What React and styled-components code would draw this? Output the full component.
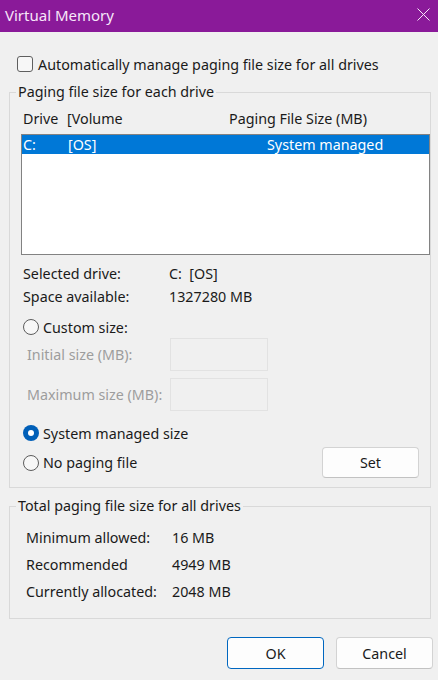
import styled, { createGlobalStyle } from "styled-components";

const GlobalStyle = createGlobalStyle`
  html, body {
    margin: 0;
    padding: 0;
    background: #f0f0f0;
  }
  body {
    font-family: "Noto Sans", "Open Sans", sans-serif;
    font-size: 14.3px;
    color: #1a1a1a;
  }
`;

const Window = styled.div`
  width: 438px;
  height: 680px;
  background: #f0f0f0;
  overflow: hidden;
`;

const TitleBar = styled.div`
  height: 32px;
  background: #8a1a99;
  display: flex;
  align-items: center;
  justify-content: space-between;
  padding: 0 8px 3px 5px;
  box-sizing: border-box;
  color: #f7e6f9;
  font-size: 15px;
`;

const CloseButton = styled.div`
  width: 14px;
  height: 14px;
  display: flex;
  align-items: center;
  justify-content: center;
`;

const Body = styled.div`
  padding: 22px 7px 0 9px;
`;

const CheckRow = styled.label`
  display: flex;
  align-items: center;
  gap: 5px;
  height: 20px;
  padding-left: 8px;
`;

const CheckBox = styled.span`
  width: 14px;
  height: 14px;
  border: 1px solid #5f5f5f;
  border-radius: 3px;
  background: #f7f7f7;
`;

const Group = styled.fieldset`
  margin: ${({ $top }) => $top}px 0 0 0;
  padding: 0;
  width: 420px;
  border: 1px solid #d9d9d9;
  min-width: 0;
`;

const Legend = styled.legend`
  margin-left: 6px;
  padding: 0 2px;
  line-height: 20px;
`;

const GroupContent = styled.div`
  padding: ${({ $pad }) => $pad};
`;

const ListHeader = styled.div`
  display: grid;
  grid-template-columns: 44px 162px 1fr;
  height: 20px;
  align-items: center;
  padding-left: 2px;
  margin-top: 6px;
`;

const ListBox = styled.div`
  margin-top: 6px;
  height: 119px;
  border: 1px solid #828282;
  background: #ffffff;
`;

const ListRow = styled.div`
  display: grid;
  grid-template-columns: 45px 199px 1fr;
  height: 19px;
  align-items: center;
  padding-left: 1px;
  background: ${({ $selected }) => ($selected ? "#0078d7" : "transparent")};
  color: ${({ $selected }) => ($selected ? "#ffffff" : "#1a1a1a")};
`;

const InfoRow = styled.div`
  display: grid;
  grid-template-columns: ${({ $label }) => $label}px 1fr;
  height: 20px;
  align-items: center;
  padding-left: ${({ $indent }) => $indent}px;
  margin-top: ${({ $top }) => $top}px;
`;

const RadioRow = styled.label`
  display: flex;
  align-items: center;
  gap: 4px;
  height: 20px;
  margin-left: 2px;
  margin-top: ${({ $top }) => $top}px;
`;

const Radio = styled.span`
  box-sizing: border-box;
  width: 16px;
  height: 16px;
  border-radius: 50%;
  border: ${({ $checked }) => ($checked ? "none" : "1px solid #5c5c5c")};
  background: ${({ $checked }) => ($checked ? "#005fb8" : "#f7f7f7")};
  display: flex;
  align-items: center;
  justify-content: center;

  &::after {
    content: "";
    display: ${({ $checked }) => ($checked ? "block" : "none")};
    width: 6px;
    height: 6px;
    border-radius: 50%;
    background: #ffffff;
  }
`;

const FieldRow = styled.div`
  display: grid;
  grid-template-columns: 143px 98px;
  align-items: center;
  padding-left: 6px;
  margin-top: ${({ $top }) => $top}px;
  color: #9d9d9d;
`;

const DisabledInput = styled.div`
  box-sizing: border-box;
  height: 33px;
  border: 1px solid #e2e2e2;
  background: #f0f0f0;
`;

const BottomRow = styled.div`
  display: flex;
  align-items: center;
  justify-content: space-between;
  margin-top: 4px;
  margin-right: 11px;
`;

const Button = styled.button`
  box-sizing: border-box;
  width: 97px;
  height: ${({ $h }) => $h}px;
  font: inherit;
  color: #1a1a1a;
  background: #fdfdfd;
  border: 1px solid ${({ $primary }) => ($primary ? "#0067c0" : "#d3d3d3")};
  border-bottom-color: ${({ $primary }) => ($primary ? "#0067c0" : "#c2c2c2")};
  border-radius: 4px;
  padding: 0;
`;

const Footer = styled.div`
  display: flex;
  justify-content: flex-end;
  gap: 12px;
  margin-top: 18px;
  padding-right: 5px;
  margin-right: -7px;
`;

const totals = [
  ["Minimum allowed:", "16 MB"],
  ["Recommended", "4949 MB"],
  ["Currently allocated:", "2048 MB"],
];

export default function App() {
  return (
    <Window>
      <GlobalStyle />
      <TitleBar>
        <span>Virtual Memory</span>
        <CloseButton>
          <svg width="13" height="13" viewBox="0 0 13 13">
            <path d="M0.5 0.5L12.5 12.5M12.5 0.5L0.5 12.5" stroke="#f7e6f9" strokeWidth="1" />
          </svg>
        </CloseButton>
      </TitleBar>
      <Body>
        <CheckRow>
          <CheckBox />
          <span>Automatically manage paging file size for all drives</span>
        </CheckRow>

        <Group $top={8}>
          <Legend>Paging file size for each drive</Legend>
          <GroupContent $pad="0 0 9px 11px">
            <ListHeader>
              <span>Drive</span>
              <span>[Volume</span>
              <span>Paging File Size (MB)</span>
            </ListHeader>
            <ListBox>
              <ListRow $selected>
                <span>C:</span>
                <span>[OS]</span>
                <span>System managed</span>
              </ListRow>
            </ListBox>
            <InfoRow $label={146} $indent={2} $top={8}>
              <span>Selected drive:</span>
              <span>C:&nbsp; [OS]</span>
            </InfoRow>
            <InfoRow $label={146} $indent={2} $top={3}>
              <span>Space available:</span>
              <span>1327280 MB</span>
            </InfoRow>
            <RadioRow $top={11}>
              <Radio />
              <span>Custom size:</span>
            </RadioRow>
            <FieldRow $top={1}>
              <span>Initial size (MB):</span>
              <DisabledInput />
            </FieldRow>
            <FieldRow $top={7}>
              <span>Maximum size (MB):</span>
              <DisabledInput />
            </FieldRow>
            <RadioRow $top={12}>
              <Radio $checked />
              <span>System managed size</span>
            </RadioRow>
            <BottomRow>
              <RadioRow $top={0}>
                <Radio />
                <span>No paging file</span>
              </RadioRow>
              <Button $h={31}>Set</Button>
            </BottomRow>
          </GroupContent>
        </Group>

        <Group $top={8}>
          <Legend>Total paging file size for all drives</Legend>
          <GroupContent $pad="11px 0 17px 16px">
            {totals.map(([label, value], i) => (
              <InfoRow key={label} $label={146} $indent={0} $top={i === 0 ? 0 : 7}>
                <span>{label}</span>
                <span>{value}</span>
              </InfoRow>
            ))}
          </GroupContent>
        </Group>

        <Footer>
          <Button $primary $h={32}>OK</Button>
          <Button $h={32}>Cancel</Button>
        </Footer>
      </Body>
    </Window>
  );
}
